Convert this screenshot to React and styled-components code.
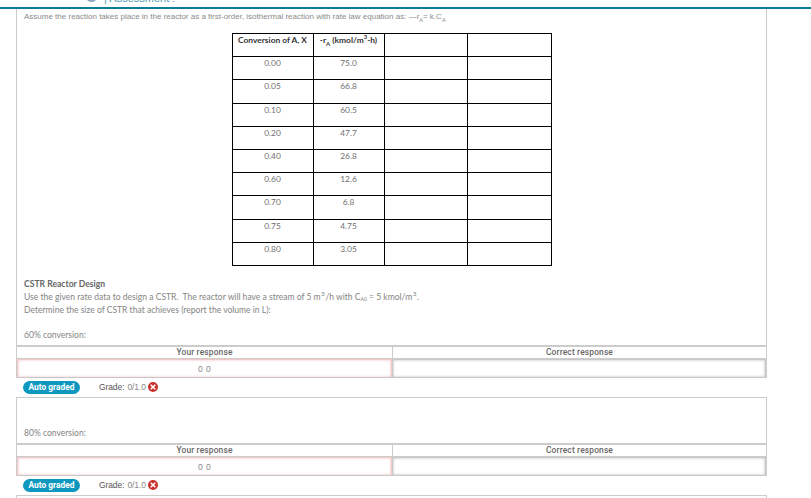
import React from "react";
import styled, { createGlobalStyle } from "styled-components";

const Global = createGlobalStyle`
  html, body { margin: 0; padding: 0; background: #fff; height: 498px; overflow: hidden; }
  * { box-sizing: border-box; }
`;

const TopStrip = styled.div`
  height: 7px;
  padding-left: 86px;
  display: flex;
  align-items: flex-end;
  gap: 7px;
  overflow: hidden;
`;
const Avatar = styled.span`
  width: 11px;
  height: 11px;
  margin-bottom: 5px;
  border-radius: 50%;
  background: #8ea6c4;
  flex: none;
`;
const Crumb = styled.span`
  margin-bottom: 3px;
  font: 11px/11px "Liberation Sans", sans-serif;
  color: #4a9ab0;
`;
const Rule = styled.div`
  height: 2px;
  background: #0b7d98;
`;
const Column = styled.main`
  width: 751px;
  margin-left: 16px;
`;
const Block = styled.section`
  border-left: 1px solid #ccc;
  border-right: 1px solid #ccc;
  border-top: ${(p) => (p.$boxed ? "1px solid #ccc" : "none")};
  padding: ${(p) => p.$pad || "0"}px 7px 3px;
`;
const Lead = styled.p`
  margin: 0;
  padding-top: 1px;
  height: 13px;
  font: 8px/13px "Liberation Sans", sans-serif;
  color: #8a8a8a;
  sub { font-size: 5.5px; line-height: 0; }
`;
const Table = styled.table`
  border-collapse: collapse;
  table-layout: fixed;
  width: 319px;
  margin: 11px auto 12px;
  font: 8.4px/11px Lato, sans-serif;
  color: #6f6f6f;
  text-align: center;
  td, th {
    border: 1.4px solid #000;
    height: 23.2px;
    padding: 1px 0 0;
    vertical-align: top;
  }
  th { color: #333; font-weight: 700; white-space: nowrap; }
  sub { font-size: 6px; line-height: 0; }
  sup { font-size: 6px; line-height: 0; }
`;
const Heading = styled.h3`
  margin: 0;
  font: 700 8.6px/13px Lato, sans-serif;
  color: #666;
`;
const Body = styled.p`
  margin: 0;
  font: 8.55px/13px Lato, sans-serif;
  color: #858585;
  sup { font-size: 6.5px; line-height: 0; margin: 0 0.5px; }
  sub { font-size: 5px; line-height: 0; vertical-align: -1px; }
`;
const Gap = styled.div`
  height: 12px;
`;
const Response = styled.div`
  display: grid;
  grid-template-columns: 375px 1fr;
  grid-template-rows: 12px 19px;
  border-top: 2px solid #ccc;
  border-left: 1px solid #ccc;
  border-right: 1px solid #ccc;
`;
const ResponseHead = styled.div`
  font: 500 8.4px/11px Roboto, sans-serif;
  letter-spacing: 0.02em;
  color: #666;
  text-align: center;
  border-left: ${(p) => (p.$second ? "1px solid #ccc" : "none")};
  border-bottom: 1px solid #ccc;
`;
const AnswerBox = styled.div`
  font: 8.5px/18px "Liberation Sans", sans-serif;
  letter-spacing: 0.05em;
  color: #888;
  text-align: center;
  border: 1px solid ${(p) => (p.$wrong ? "#f0c8c8" : "#c8c8c8")};
  border-bottom-color: #c8c8c8;
  box-shadow: inset 0 0 3px ${(p) => (p.$wrong ? "#f3c0c0" : "#bbb")};
`;
const GradeRow = styled.div`
  height: 19px;
  padding: 3px 0 0 7px;
  display: flex;
  align-items: flex-start;
  gap: 19px;
`;
const Pill = styled.span`
  width: 57px;
  height: 13px;
  border-radius: 7px;
  background: #0e98bf;
  color: #fff;
  font: 700 8.4px/13px Roboto, sans-serif;
  text-align: center;
`;
const Grade = styled.span`
  display: flex;
  align-items: center;
  gap: 2px;
  height: 13px;
  font: 8.5px/13px "Liberation Sans", sans-serif;
  letter-spacing: -0.1px;
  color: #888;
  b { font-weight: 400; color: #555; margin-right: 1px; }
`;

const CrossBadge = () => (
  <svg width="10" height="10" viewBox="0 0 10 10" aria-hidden="true">
    <circle cx="5" cy="5" r="5" fill="#c9302c" />
    <path d="M3.2 3.2 6.8 6.8M6.8 3.2 3.2 6.8" stroke="#fff" strokeWidth="1.6" strokeLinecap="round" />
  </svg>
);

const rows = [
  ["0.00", "75.0"],
  ["0.05", "66.8"],
  ["0.10", "60.5"],
  ["0.20", "47.7"],
  ["0.40", "26.8"],
  ["0.60", "12.6"],
  ["0.70", "6.8"],
  ["0.75", "4.75"],
  ["0.80", "3.05"],
];

const Answer = () => (
  <>
    <Response>
      <ResponseHead>Your response</ResponseHead>
      <ResponseHead $second>Correct response</ResponseHead>
      <AnswerBox $wrong>0 0</AnswerBox>
      <AnswerBox />
    </Response>
    <GradeRow>
      <Pill>Auto graded</Pill>
      <Grade>
        <b>Grade:</b> 0/1.0 <CrossBadge />
      </Grade>
    </GradeRow>
  </>
);

export default function App() {
  return (
    <>
      <Global />
      <TopStrip>
        <Avatar />
        <Crumb>| Assessment !</Crumb>
      </TopStrip>
      <Rule />
      <Column>
        <Block>
          <Lead>
            Assume the reaction takes place in the reactor as a first-order, isothermal reaction with rate law equation as: &#8212;r<sub>A</sub>= k.C<sub>A</sub>
          </Lead>
          <Table>
            <colgroup>
              <col width="81" />
              <col width="71" />
              <col width="83" />
              <col width="84" />
            </colgroup>
            <tbody>
              <tr>
                <th>Conversion of A, X</th>
                <th>
                  -r<sub>A</sub> (kmol/m<sup>3</sup>-h)
                </th>
                <td />
                <td />
              </tr>
              {rows.map(([x, r]) => (
                <tr key={x}>
                  <td>{x}</td>
                  <td>{r}</td>
                  <td />
                  <td />
                </tr>
              ))}
            </tbody>
          </Table>
          <Heading>CSTR Reactor Design</Heading>
          <Body>
            Use the given rate data to design a CSTR.&nbsp; The reactor will have a stream of 5 m<sup>3</sup>/h with C<sub>A0</sub> = 5 kmol/m<sup>3</sup>.
          </Body>
          <Body>Determine the size of CSTR that achieves (report the volume in L):</Body>
          <Gap />
          <Body>60% conversion:</Body>
        </Block>
        <Answer />
        <Block $boxed $pad={29}>
          <Body>80% conversion:</Body>
        </Block>
        <Answer />
        <Block $boxed $pad={29} />
      </Column>
    </>
  );
}
